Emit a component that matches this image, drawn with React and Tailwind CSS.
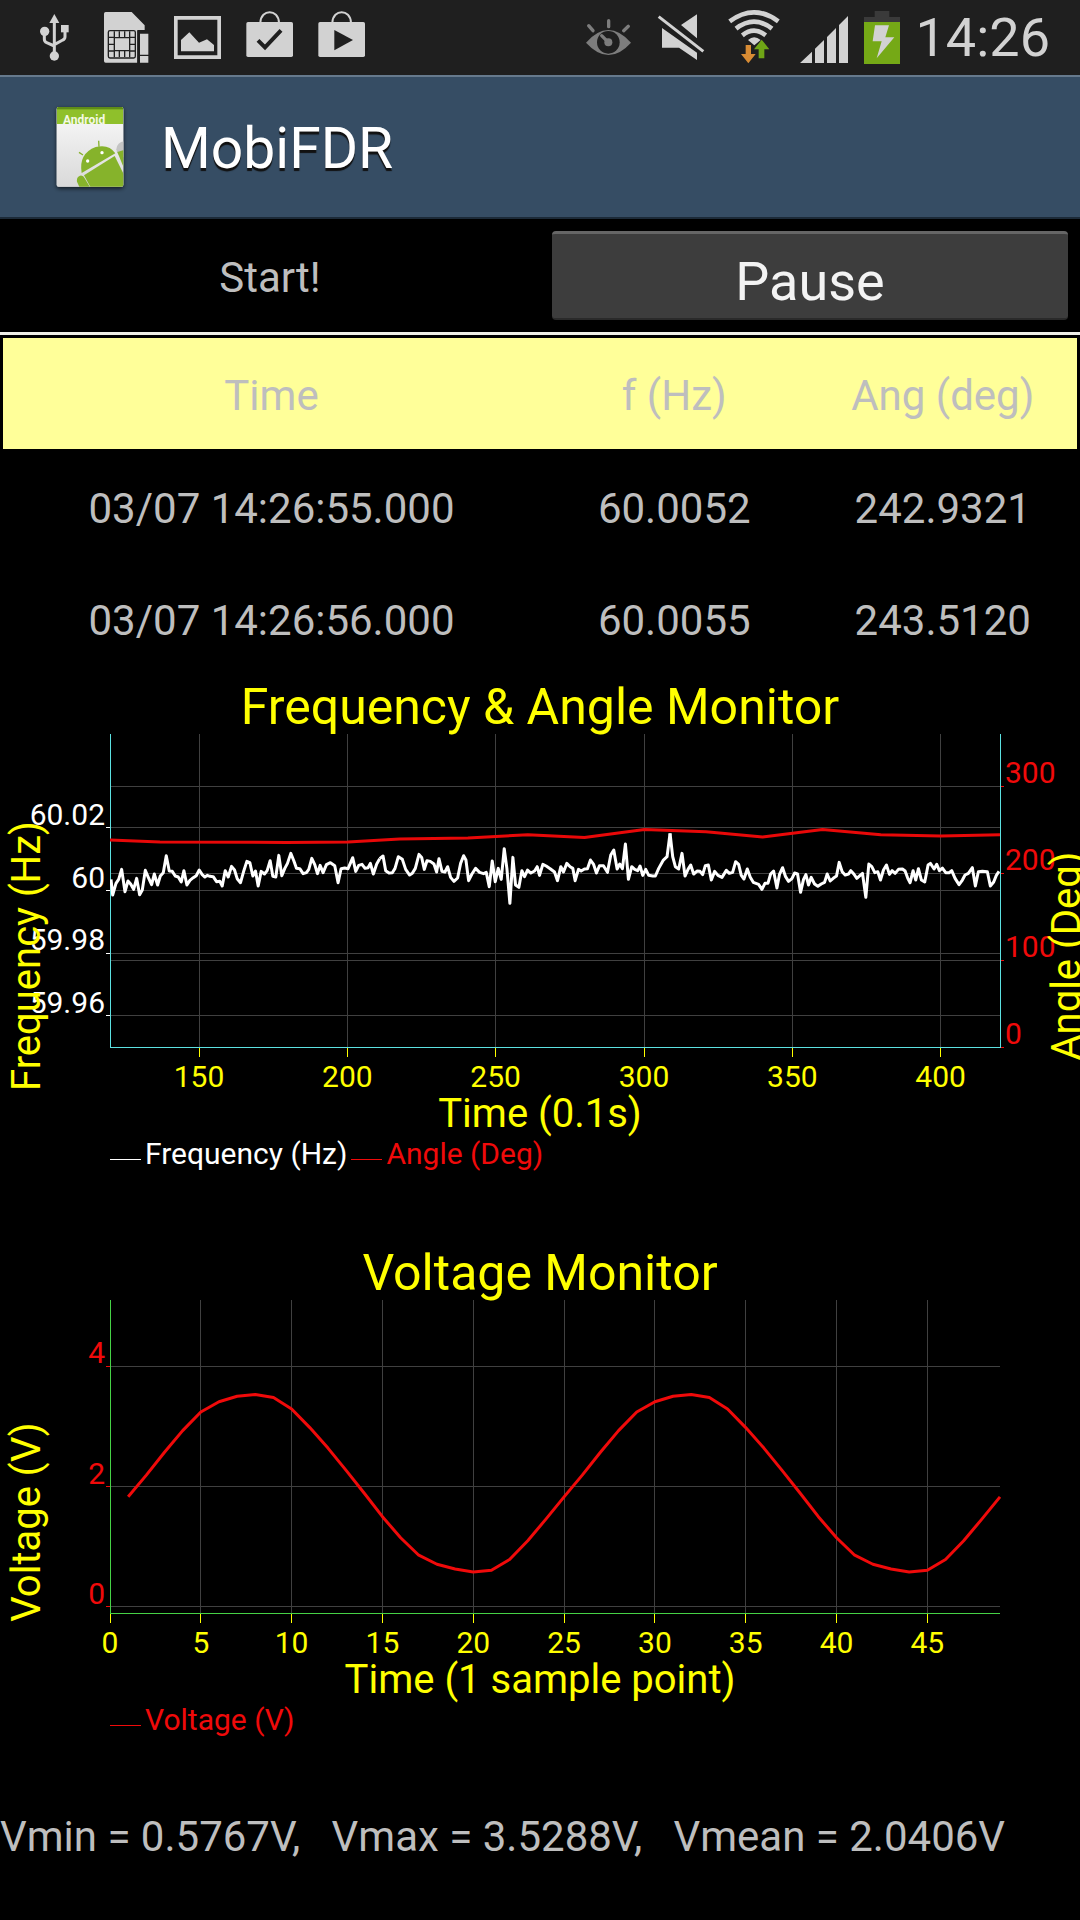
import { useState } from "react";

// Size of the plot area inside the chart drawing
const PLOT = { left: 110, top: 2, width: 890, height: 313 };
const BOTTOM = PLOT.top + PLOT.height;
const RIGHT = PLOT.left + PLOT.width;

const readings = [
  { time: "03/07 14:26:55.000", freq: "60.0052", angle: "242.9321" },
  { time: "03/07 14:26:56.000", freq: "60.0055", angle: "243.5120" },
];

// Frequency trace, kept in three buffers that follow each other
const frequencyBuffers = [
  {
    start: 0,
    points:
      "33,238 38,285 48,250 56,238 65,208 75,275 84,243 92,252 101,268 110,235 119,284 127,270 136,211 145,232 155,254 163,222 173,255 181,228 190,218 199,167 208,213 217,214 226,228 235,231 244,246 252,212 261,255 270,241 280,233 289,227 298,210 307,224 315,231 322,226 330,229 340,230 350,245 360,244 367,258 376,212 385,231 395,199 404,210 412,236 422,248 432,212 441,184 450,188 459,228 467,213 475,258 484,214 494,222 502,212 511,182 519,229 528,231 537,166 546,227 555,205 563,190 573,160 582,182 590,205 600,206 610,221 620,218 627,208 636,175 645,194 653,221 661,196 670,218 680,194 692,188 705,197 715,248 724,206 735,204 745,206 759,173 768,214 777,196 787,193 796,205 805,203 812,190 821,222 831,192 840,176",
  },
  {
    start: 840,
    points:
      "0,176 10,168 18,212 28,219 38,218 46,205 56,170 68,178 78,208 90,225 98,220 107,205 118,163 126,172 134,208 142,182 152,184 163,192 171,216 178,176 187,214 196,216 204,200 213,232 223,244 234,234 243,190 252,167 259,180 267,242 277,222 288,205 300,217 312,221 320,217 329,260 338,183 347,245 356,205 365,238 374,146 382,205 391,310 400,172 408,255 418,262 427,212 435,230 444,210 454,219 465,213 473,200 480,226 490,193 500,198 512,206 525,216 534,242 544,200 552,216 562,190 572,200 580,205 587,242 597,208 605,213 615,207 624,206 633,180 642,192 651,219 660,197 672,197 684,217 694,165 703,150 713,207 721,192 729,206 738,132 747,238 757,200 766,208 775,212 782,198 790,226 799,208 808,226 820,228 828,228 838,205 852,180 863,170 872,100",
  },
  {
    start: 1620,
    points:
      "92,100 100,170 108,200 118,207 128,160 137,228 146,208 154,195 163,222 173,213 182,214 190,224 198,197 207,195 216,240 226,214 236,226 248,232 261,211 270,220 280,217 289,185 298,193 306,226 314,237 324,207 333,232 342,247 358,253 368,268 377,250 386,250 394,222 403,213 413,264 421,222 430,203 439,230 448,244 458,236 466,219 475,222 484,277 493,238 500,224 508,255 516,232 526,252 536,259 546,252 556,247 564,222 573,243 583,234 592,228 600,187 609,215 618,225 628,222 635,212 644,222 653,235 663,226 670,220 680,292 689,192 698,200 707,218 716,215 724,240 733,210 742,195 751,223 759,212 768,220 778,208 790,207 798,213 806,235 813,248 822,212 830,240 838,206 847,240 857,246 867,195 874,190 885,207 893,193 901,212 910,204 920,218 930,218 938,212 948,235 960,254 970,240 978,225 988,220 1000,203 1009,258 1018,215 1030,214 1045,215 1054,258 1064,246 1072,226 1080,214",
  },
];

const anglePoints =
  "30,120 180,126 560,127 745,126 900,117 1105,114 1285,104 1455,112 1635,88 1820,95 1990,111 2170,88 2345,104 2525,108 2703,104";

// One period of the sampled voltage
const voltagePeriod = [
  1.83, 2.19, 2.57, 2.93, 3.24, 3.41, 3.5, 3.53, 3.48, 3.29, 2.98, 2.64, 2.27,
  1.89, 1.5, 1.15, 0.86, 0.71, 0.63, 0.58, 0.61, 0.79, 1.1, 1.46,
];

function scaleX([min, max], value) {
  return PLOT.left + ((value - min) / (max - min)) * PLOT.width;
}

function scaleY([min, max], value) {
  return BOTTOM - ((value - min) / (max - min)) * PLOT.height;
}

function StatusIcon({ children, x, wide = true }) {
  return (
    <svg
      viewBox={`${x} 0 ${wide ? 216 : 132} 225`}
      className={wide ? "h-[75px] w-[72px]" : "h-[75px] w-[44px]"}
      fill="#d2d2d2"
      aria-hidden="true"
    >
      {children}
    </svg>
  );
}

function Bag({ x }) {
  return (
    <g>
      <path d={`M${x + 42} 68c2-42 54-42 56 0`} fill="none" stroke="#d2d2d2" strokeWidth="6" />
      <rect x={x} y="66" width="140" height="105" rx="5" />
    </g>
  );
}

function StatusBar() {
  return (
    <div className="flex h-[75px] items-center justify-between bg-[#1f1f1f] pr-[30px] pl-[18px]">
      <div className="flex">
        <StatusIcon x={54}>
          <path d="M163 42l-15 27h30z" />
          <path d="M163 62v105M133 98v20q0 7 7 10l23 10M195 90v20q0 7-7 10l-25 14" fill="none" stroke="#d2d2d2" strokeWidth="9" />
          <circle cx="134" cy="94" r="14" />
          <rect x="183" y="75" width="23" height="22" />
          <circle cx="163" cy="168" r="14" />
        </StatusIcon>
        <StatusIcon x={270}>
          <path d="M317 36h78l39 40v14h-22v98h-95q-5 0-5-5V41q0-5 5-5z" />
          <rect x="325" y="92" width="81" height="82" rx="5" fill="none" stroke="#1f1f1f" strokeWidth="4" />
          <path d="M343 94v78M389 94v78M343 113h46M343 152h46M358 94v18M374 94v18M358 153v18M374 153v18M327 112h14M327 133h14M327 153h14M391 112h14M391 133h14M391 153h14" fill="none" stroke="#1f1f1f" strokeWidth="4" />
          <path d="M412 92h34v98h-34z" fill="#1f1f1f" />
          <path d="M420 101h25v63h-25zM420 168h25v20h-25z" />
        </StatusIcon>
        <StatusIcon x={486}>
          <path fillRule="evenodd" d="M522 48h141v129H522zM533 59v107h119V59z" />
          <path d="M543 154v-34l25-23 29 31 24-10 21 17v19z" />
        </StatusIcon>
        <StatusIcon x={702}>
          <Bag x={739} />
          <path d="M774 121l21 21 48-51" fill="none" stroke="#1f1f1f" strokeWidth="12" />
        </StatusIcon>
        <StatusIcon x={918}>
          <Bag x={955} />
          <path d="M1003 90v61l56-31z" fill="#1f1f1f" />
        </StatusIcon>
      </div>
      <div className="flex items-center">
        <StatusIcon x={36}>
          <path d="M78 128q67-76 135 0q-67 74-135 0z" fill="#7d7d7d" />
          <circle cx="145" cy="127" r="34" fill="#1f1f1f" />
          <circle cx="145" cy="127" r="12" fill="#7d7d7d" />
          <path d="M145 127l-20-20M86 77l13 15M146 62v18M205 79l-14 13" fill="none" stroke="#7d7d7d" strokeWidth="10" strokeLinecap="round" />
        </StatusIcon>
        <StatusIcon x={252}>
          <path d="M363 75l48-32v72zM306 84l105 74v22l-54-37h-51z" />
          <path d="M296 50l134 104" stroke="#d2d2d2" strokeWidth="9" />
        </StatusIcon>
        <StatusIcon x={468}>
          <g fill="none" stroke="#d2d2d2" strokeWidth="14">
            <path d="M509 64q73-54 146 0" />
            <path d="M528 86q54-42 108 0" />
            <path d="M547 106q35-28 70 0" />
          </g>
          <path d="M564 120q18-16 38 0l-19 16z" />
          <path d="M557 135h16v27h14l-22 28-22-28h14z" fill="#d88c34" />
          <path d="M596 175h17v-27h15l-23-29-23 29h14z" fill="#6fa516" />
        </StatusIcon>
        <StatusIcon x={684}>
          <path d="M720 189l36-34v34zM765 189v-43l27-26v69zM801 189v-78l27-27v105zM837 189V75l27-27v141z" />
        </StatusIcon>
        <StatusIcon x={900} wide={false}>
          <path d="M944 33h44v18h32v15H912V51h32z" fill="#3a3a3a" />
          <path d="M912 66h108v126H912z" fill="#75a916" />
          <path d="M945 76h42l-11 36h27l-53 63 15-51h-27z" />
        </StatusIcon>
        <span className="pl-[12px] text-[54px] leading-[72px] text-[#d2d2d2]">14:26</span>
      </div>
    </div>
  );
}

function AppIcon() {
  return (
    <svg viewBox="150 300 240 285" className="h-[95px] w-[80px]" aria-hidden="true">
      <defs>
        <linearGradient id="paper" x1="0" y1="0" x2="0" y2="1">
          <stop offset="0" stopColor="#fafafa" />
          <stop offset="1" stopColor="#d9d9d9" />
        </linearGradient>
        <clipPath id="sheet">
          <rect x="170" y="321" width="200" height="239" rx="6" />
        </clipPath>
        <filter id="drop" x="-20%" y="-20%" width="140%" height="140%">
          <feDropShadow dx="0" dy="5" stdDeviation="6" floodColor="#000" floodOpacity="0.7" />
        </filter>
      </defs>
      <rect x="170" y="321" width="200" height="239" rx="6" fill="#d9d9d9" filter="url(#drop)" />
      <g clipPath="url(#sheet)">
        <rect x="170" y="321" width="200" height="239" fill="url(#paper)" />
        <rect x="170" y="321" width="200" height="51" fill="#8fc02b" />
        <rect x="170" y="321" width="200" height="7" fill="#5f8d17" />
        <svg x="170" y="321" width="200" height="51">
          <text x="19" y="52" fill="#f4f9e6" className="text-[36px] font-bold">Android</text>
        </svg>
        <circle cx="373" cy="448" r="24" fill="#c4c4c4" />
        <g fill="#86b32b">
          <path d="M245 519q-10-58 42-78q40-10 59 19z" />
          <path d="M252 526l92-58 30 60v40H275z" />
          <path d="M352 456l20-6v55z" />
          <path d="M231 545q-2-14 9-18q10-2 14 8l18 30h-32z" />
          <path d="M249 465l-12-8M297 440l-1-18" stroke="#86b32b" strokeWidth="4" />
        </g>
        <circle cx="263" cy="483" r="5" fill="#fff" />
        <circle cx="306" cy="458" r="5" fill="#fff" />
      </g>
    </svg>
  );
}

function Legend({ items }) {
  return (
    <ul className="flex h-[40px] gap-1 pl-[110px] text-[30px] leading-[40px]">
      {items.map((item) => (
        <li key={item.label} className={`flex items-center gap-1 ${item.color}`}>
          <span className="mt-[10px] h-px w-[31px] bg-current" />
          {item.label}
        </li>
      ))}
    </ul>
  );
}

function Chart({ title, xTitle, xRange, xTicks, left, right, axisColor, legend, children }) {
  return (
    <section className="mt-[74px] first:mt-[9px]">
      <h2 className="text-center text-[50px] leading-[50px] text-[#ffff00]">{title}</h2>
      <svg viewBox="0 0 1080 402" className="block w-full overflow-visible" role="img" aria-label={title}>
        <g shapeRendering="crispEdges">
          {xTicks.map((tick) => (
            <g key={tick}>
              <path d={`M${scaleX(xRange, tick)} ${PLOT.top}V${BOTTOM}`} stroke="#404040" />
              <path d={`M${scaleX(xRange, tick)} ${BOTTOM}v10`} stroke="#ffff00" />
            </g>
          ))}
          {left.ticks.map((tick) => (
            <g key={tick}>
              <path d={`M${PLOT.left} ${scaleY(left.range, tick)}H${RIGHT}`} stroke="#404040" />
              <path d={`M${PLOT.left - 4} ${scaleY(left.range, tick)}h4`} stroke={left.color} />
            </g>
          ))}
          {right?.ticks.map((tick) => (
            <g key={tick}>
              <path d={`M${PLOT.left} ${scaleY(right.range, tick)}H${RIGHT}`} stroke="#404040" />
              <path d={`M${RIGHT} ${scaleY(right.range, tick)}h4`} stroke={right.color} />
            </g>
          ))}
          <path
            d={`M${PLOT.left} ${PLOT.top}V${BOTTOM}H${RIGHT}${right ? `V${PLOT.top}` : ""}`}
            fill="none"
            stroke={axisColor}
          />
        </g>

        {children}

        <g className="text-[30px]">
          {xTicks.map((tick) => (
            <text key={tick} x={scaleX(xRange, tick)} y={BOTTOM + 40} textAnchor="middle" fill="#ffff00">
              {tick}
            </text>
          ))}
          {left.ticks.map((tick) => (
            <text key={tick} x={PLOT.left - 5} y={scaleY(left.range, tick) - 3} textAnchor="end" fill={left.color}>
              {tick}
            </text>
          ))}
          {right?.ticks.map((tick) => (
            <text key={tick} x={RIGHT + 5} y={scaleY(right.range, tick) - 3} fill={right.color}>
              {tick}
            </text>
          ))}
        </g>
        <g className="text-[40px]" fill="#ffff00" textAnchor="middle">
          <text x="540" y={BOTTOM + 80}>{xTitle}</text>
          <text transform="translate(40 224) rotate(-90)">{left.title}</text>
          {right && <text transform="translate(1080 224) rotate(-90)">{right.title}</text>}
        </g>
      </svg>
      <Legend items={legend} />
    </section>
  );
}

export default function App() {
  const [paused, setPaused] = useState(false);

  const voltageRange = [-0.1, 5.1];
  const samples = Array.from({ length: 49 }, (_, i) => voltagePeriod[i % 24]);
  const voltagePoints = samples
    .map((v, i) => `${scaleX([0, 49], i + 1)},${scaleY(voltageRange, v)}`)
    .join(" ");

  return (
    <div className="min-h-screen overflow-hidden bg-black font-[Roboto,sans-serif] text-[#bebebe]">
      <StatusBar />
      <header className="flex h-[144px] items-center border-t-2 border-b-2 border-t-[#667a8d] border-b-[#1c2a38] bg-[#364d64] pl-[50px]">
        <AppIcon />
        <h1 className="pt-1 pl-[31px] text-[57px] leading-[72px] text-white [text-shadow:0_3px_1px_#111]">MobiFDR</h1>
      </header>

      <div className="grid h-[116px] grid-cols-2 items-center border-b-3 border-[#f0f0e8]">
        <p className="pt-1 text-center text-[42px] leading-[50px]">Start!</p>
        <button
          type="button"
          onClick={() => setPaused(!paused)}
          className="mr-[12px] ml-[12px] h-[89px] rounded-sm border-t-3 border-b-2 border-t-[#666] border-b-[#2a2a2a] bg-[#3d3d3d] pt-[12px] text-[54px] leading-[64px] text-[#f3f3f3]"
        >
          {paused ? "Resume" : "Pause"}
        </button>
      </div>

      <div className="px-[3px] pt-[3px]">
        <table className="w-full table-fixed text-center text-[42px] leading-[50px]">
          <thead>
            <tr className="h-[111px] bg-[#ffff99]">
              <th className="w-1/2 pt-1 font-normal">Time</th>
              <th className="w-1/4 pt-1 font-normal">f (Hz)</th>
              <th className="w-1/4 pt-1 font-normal">Ang (deg)</th>
            </tr>
          </thead>
          <tbody>
            {readings.map((row) => (
              <tr key={row.time} className="h-[112px]">
                <td className="pt-2">{row.time}</td>
                <td className="pt-2">{row.freq}</td>
                <td className="pt-2">{row.angle}</td>
              </tr>
            ))}
          </tbody>
        </table>
      </div>

      <main>
        <Chart
          title="Frequency & Angle Monitor"
          xTitle="Time (0.1s)"
          xRange={[120, 420]}
          xTicks={[150, 200, 250, 300, 350, 400]}
          left={{ title: "Frequency (Hz)", range: [59.95, 60.05], ticks: [60.02, 60, 59.98, 59.96], color: "#ffffff" }}
          right={{ title: "Angle (Deg)", range: [0, 360], ticks: [300, 200, 100, 0], color: "#f00a0a" }}
          axisColor="#5ce1e1"
          legend={[
            { label: "Frequency (Hz)", color: "text-white" },
            { label: "Angle (Deg)", color: "text-[#f00a0a]" },
          ]}
        >
          <svg
            x={PLOT.left}
            y={PLOT.top}
            width={PLOT.width}
            height={PLOT.height}
            viewBox="30 -198 2673 939"
            fill="none"
            strokeWidth="9"
            strokeLinejoin="round"
          >
            {frequencyBuffers.map((buffer) => (
              <polyline key={buffer.start} transform={`translate(${buffer.start} 0)`} points={buffer.points} stroke="#fff" />
            ))}
            <polyline points={anglePoints} stroke="#e80808" />
          </svg>
        </Chart>

        <Chart
          title="Voltage Monitor"
          xTitle="Time (1 sample point)"
          xRange={[0, 49]}
          xTicks={[0, 5, 10, 15, 20, 25, 30, 35, 40, 45]}
          left={{ title: "Voltage (V)", range: voltageRange, ticks: [4, 2, 0], color: "#f00a0a" }}
          axisColor="#46d246"
          legend={[{ label: "Voltage (V)", color: "text-[#f00a0a]" }]}
        >
          <polyline points={voltagePoints} fill="none" stroke="#f00a0a" strokeWidth="3" strokeLinejoin="round" />
        </Chart>
      </main>

      <p className="mt-[72px] text-[42px] leading-[50px] whitespace-pre">
        {"Vmin = 0.5767V,   Vmax = 3.5288V,   Vmean = 2.0406V"}
      </p>
    </div>
  );
}
